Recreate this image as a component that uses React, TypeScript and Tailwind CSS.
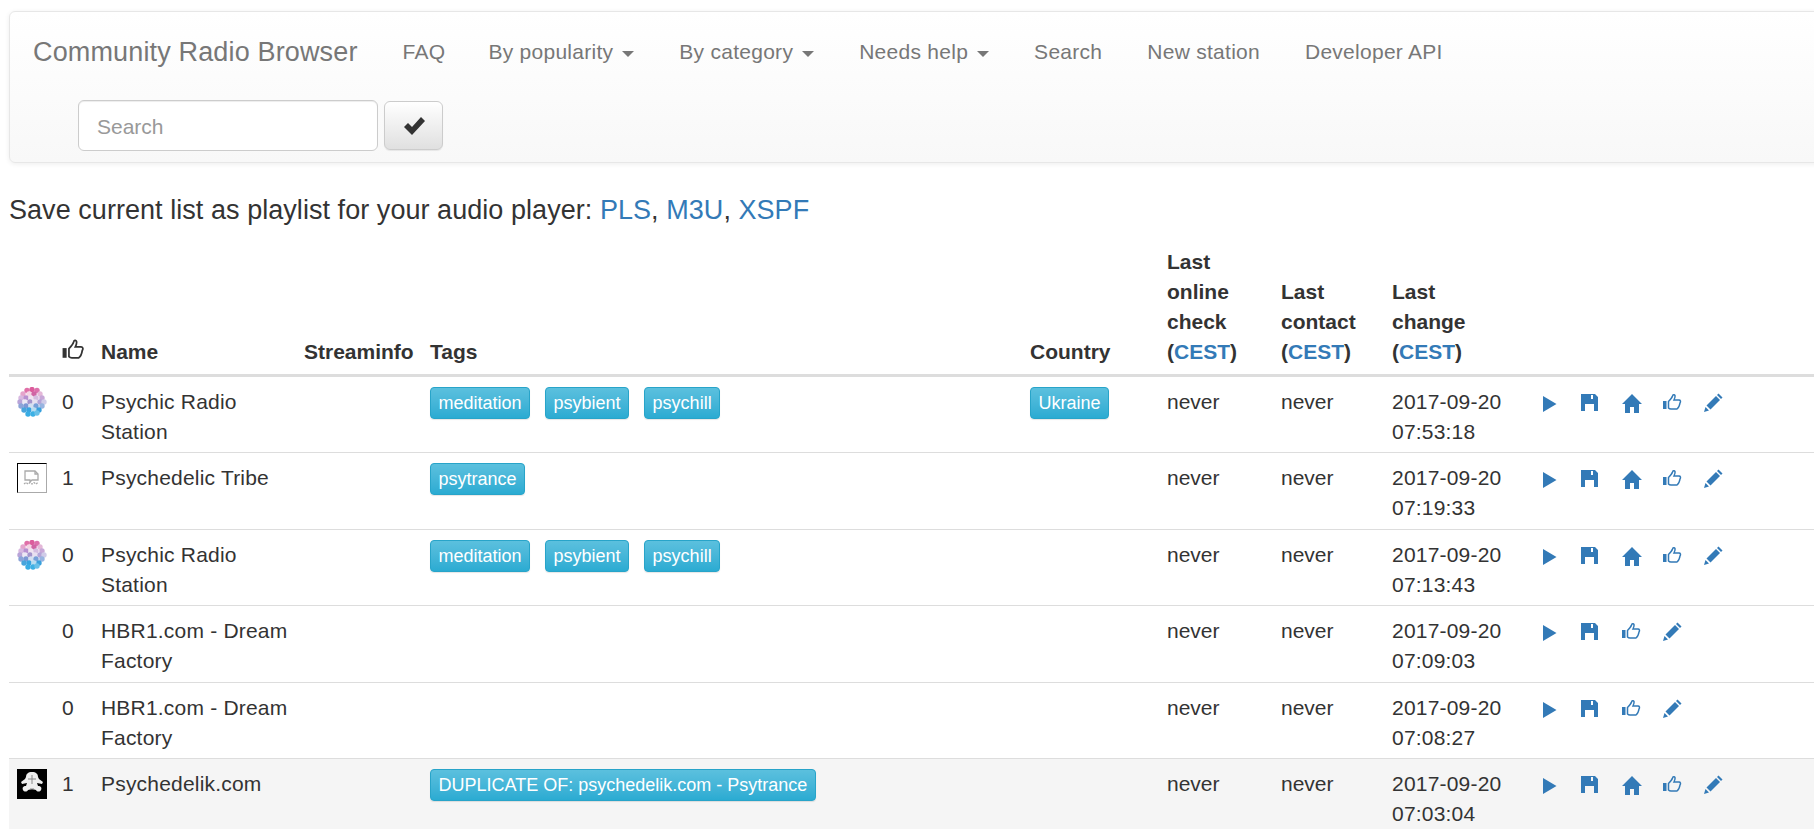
import type { ReactNode } from 'react'

const rows = [
  { img: 'flower', votes: 0, name: 'Psychic Radio Station', tags: ['meditation', 'psybient', 'psychill'], country: 'Ukraine', date: '2017-09-20', time: '07:53:18', home: true },
  { img: 'broken', votes: 1, name: 'Psychedelic Tribe', tags: ['psytrance'], country: '', date: '2017-09-20', time: '07:19:33', home: true },
  { img: 'flower', votes: 0, name: 'Psychic Radio Station', tags: ['meditation', 'psybient', 'psychill'], country: '', date: '2017-09-20', time: '07:13:43', home: true },
  { img: '', votes: 0, name: 'HBR1.com - Dream Factory', tags: [], country: '', date: '2017-09-20', time: '07:09:03', home: false },
  { img: '', votes: 0, name: 'HBR1.com - Dream Factory', tags: [], country: '', date: '2017-09-20', time: '07:08:27', home: false },
  { img: 'black', votes: 1, name: 'Psychedelik.com', tags: ['DUPLICATE OF: psychedelik.com - Psytrance'], country: '', date: '2017-09-20', time: '07:03:04', home: true },
]

const navItems = [
  { label: 'FAQ', cls: 'flex items-center pl-[22.500px] pr-[20.500px] tracking-[0.27px]' },
  { label: 'By popularity', caret: true, cls: 'flex items-center px-[22.500px] tracking-[0.27px]' },
  { label: 'By category', caret: true, cls: 'flex items-center px-[22.500px] tracking-[0.27px]' },
  { label: 'Needs help', caret: true, cls: 'flex items-center px-[22.500px] tracking-[0.27px]' },
  { label: 'Search', cls: 'flex items-center px-[22.500px] tracking-[0.27px]' },
  { label: 'New station', cls: 'flex items-center px-[22.500px] tracking-[0.27px]' },
  { label: 'Developer API', cls: 'flex items-center px-[22.500px] tracking-[0.27px]' },
]

const dots = [
  [15, 2.500, '#dc5c9c'], [10, 3.500, '#e070a8'], [20, 3.500, '#dc70ac'], [6, 7, '#e4a4cc'], [12, 7, '#f4d4e4'], [17, 7, '#d064a4'], [23, 7, '#e4b8d8'],
  [4, 11, '#d8b8e0'], [9, 11, '#b890d0'], [14, 11, '#f0e4f0'], [19, 11, '#d4bce0'], [25, 11, '#c8a8d8'],
  [3, 15, '#b8a4d8'], [8, 15, '#ece8f4'], [13, 15, '#a494cc'], [18, 15, '#e8e0f0'], [23, 15, '#b4a4d8'], [27, 15, '#d0cce8'],
  [4, 19, '#8ca4d8'], [9, 19, '#7c98d4'], [14, 19, '#d4e0f0'], [19, 19, '#78a0d8'], [25, 19, '#98b4e0'],
  [7, 23, '#48a4dc'], [12, 23, '#38a4e0'], [17, 23, '#b8dcf0'], [22, 23, '#38a0dc'],
  [11, 27, '#38ace4'], [16, 27, '#3cb0e4'], [20, 26, '#68c0e8'],
] as const

function Flower() {
  return (
    <svg width="30" height="30" viewBox="0 0 30 30" className="block">
      {dots.map(([x, y, c], i) => (
        <circle key={i} cx={x} cy={y} r="2.700" fill={c} />
      ))}
    </svg>
  )
}

function Broken() {
  return (
    <div className="w-[30px] h-[30px] border border-t-black border-l-black border-r-[#aaa] border-b-[#aaa] flex items-center justify-center">
      <svg width="18" height="18" viewBox="0 0 18 18" fill="none" stroke="#aaa" strokeWidth="1.300">
        <path d="M2 2h10l3 3v6H9l-2 2v-2H2z" />
        <path d="M12 2v3h3" />
        <path d="M1 15l2-1.500 2 1.500 2-1.500 2 1.500 2-1.500 2 1.500 2-1.500" strokeDasharray="2 1" />
      </svg>
    </div>
  )
}

function BlackLogo() {
  return (
    <svg width="30" height="30" viewBox="0 0 30 30" className="block">
      <rect width="30" height="30" fill="#000" />
      <path d="M15 3c4 0 6 2 6 5l1 2 4 3-1 2-5-1 1 3c3 0 4 2 3 4s-4 2-5 0l-4-1-4 1c-1 2-4 2-5 0s0-4 3-4l1-3-5 1-1-2 4-3 1-2c0-3 2-5 6-5z" fill="#eee" />
      <path d="M15 6v9M11 10h8M13 20h4" stroke="#888" strokeWidth="1" />
    </svg>
  )
}

function Glyph({ children }: { children: ReactNode }) {
  return (
    <svg width="21" height="21" viewBox="0 0 21 21" fill="#337ab7" className="block">
      {children}
    </svg>
  )
}

const playIcon = <polygon points="4,3 17.500,11 4,19" />
const saveIcon = <path fillRule="evenodd" d="M1 1h14l3 3v14H1zM11 2v4h2V2zM5 11v7h9v-7z" />
const homeIcon = <path d="M11 1l10 10h-3v9h-5v-6H9v6H4v-9H1z" />
const pencilIcon = (
  <>
    <polygon points="3.500,12.500 13,3 17,7 7.500,16.500" />
    <polygon points="14,2 15.500,0.500 19.500,4.500 18,6" />
    <polygon points="2.500,14 6,17.500 1,19" />
  </>
)

function ThumbPaths({ color }: { color: string }) {
  return (
    <>
      <rect x="1" y="8" width="3.500" height="8" fill={color} />
      <path
        d="M6.500 8.500C8 7 10 5 10.500 3C10.800 1.500 12.500 1.200 13 2.500C13.500 4 12.500 6 12 7H17C18.500 7 19 8.500 18 10C17.500 13 16.500 15 15 16H9C8 16 7 15.500 6.500 15Z"
        fill="none"
        stroke={color}
        strokeWidth="1.500"
      />
    </>
  )
}

function Tag({ children }: { children: ReactNode }) {
  return (
    <span className="inline-block h-8 px-[7.500px] border border-[#28a4c9] rounded-[4px] bg-gradient-to-b from-[#5bc0de] to-[#2aabd2] text-white text-[18px] leading-[31px] whitespace-nowrap shadow-[0_1px_1px_rgba(0,0,0,0.1)]">
      {children}
    </span>
  )
}

function TimeHeader({ lines }: { lines: string[] }) {
  return (
    <th className="px-2 pb-[7px] pt-2 text-left align-bottom font-bold tracking-normal">
      {lines.map((l) => (
        <div key={l}>{l}</div>
      ))}
      (<a className="text-[#337ab7]">CEST</a>)
    </th>
  )
}

export default function App() {
  return (
    <div className="h-screen overflow-hidden bg-white font-['Liberation_Sans',Arial,sans-serif] text-[21px] leading-[30px] text-[#333]">
      <div className="w-[1900px] pl-[9px] pt-[11px]">
        {/* Navbar */}
        <nav className="h-[152px] border border-[#e7e7e7] rounded-[6px] bg-gradient-to-b from-white to-[#f8f8f8] shadow-[0_1px_5px_rgba(0,0,0,0.075)] pl-[23px]">
          <div className="flex items-center h-[80px] text-[#777]">
            <span className="text-[27px] tracking-[0.15px] mr-[22.500px]">Community Radio Browser</span>
            {navItems.map((item) => (
              <span key={item.label} className={item.cls}>
                {item.label}
                {item.caret && (
                  <span className="ml-[9px] mt-[3px] w-0 h-0 border-x-[6px] border-t-[6px] border-x-transparent border-t-[#777]" />
                )}
              </span>
            ))}
          </div>
          <div className="flex items-start gap-[6px] pl-[45px] mt-[8px]">
            <div className="w-[300px] h-[51px] border border-[#ccc] rounded-[6px] bg-white shadow-[inset_0_1px_1px_rgba(0,0,0,0.075)] px-[18px] leading-[51px] text-[#999]">
              Search
            </div>
            <button className="w-[59px] h-[49px] mt-[1px] border border-[#ccc] rounded-[6px] bg-gradient-to-b from-white to-[#e0e0e0] flex items-center justify-center shadow-[0_1px_1px_rgba(0,0,0,0.075)]">
              <svg width="22" height="20" viewBox="0 0 22 20" fill="#333">
                <path d="M1 11l4-4 4 4L18 1l4 4L9 19z" />
              </svg>
            </button>
          </div>
        </nav>

        <p className="mt-[28px] mb-[10px] text-[27px] leading-[38px] tracking-[0.05px]">
          Save current list as playlist for your audio player: <a className="text-[#337ab7]">PLS</a>, <a className="text-[#337ab7]">M3U</a>, <a className="text-[#337ab7]">XSPF</a>
        </p>

        <table className="w-full table-fixed border-collapse tracking-[0.2px]">
          <colgroup>
            <col className="w-[45px]" />
            <col className="w-[39px]" />
            <col className="w-[203px]" />
            <col className="w-[126px]" />
            <col className="w-[600px]" />
            <col className="w-[137px]" />
            <col className="w-[114px]" />
            <col className="w-[111px]" />
            <col className="w-[147px]" />
            <col />
          </colgroup>
          <thead>
            <tr className="border-b-[3px] border-[#ddd]">
              <th />
              <th className="px-2 pb-[7px] text-left align-bottom">
                <svg width="22" height="20" viewBox="0.500 0.500 19 16.500" preserveAspectRatio="none" className="block mb-[8px]">
                  <ThumbPaths color="#333" />
                </svg>
              </th>
              <th className="px-2 pb-[7px] text-left align-bottom font-bold tracking-normal">Name</th>
              <th className="px-2 pb-[7px] text-left align-bottom font-bold tracking-normal">Streaminfo</th>
              <th className="px-2 pb-[7px] text-left align-bottom font-bold tracking-normal">Tags</th>
              <th className="px-2 pb-[7px] text-left align-bottom font-bold tracking-normal">Country</th>
              <TimeHeader lines={['Last', 'online', 'check']} />
              <TimeHeader lines={['Last', 'contact']} />
              <TimeHeader lines={['Last', 'change']} />
              <th />
            </tr>
          </thead>
          <tbody>
            {rows.map((row, i) => (
              <tr key={i} className={i === 5 ? 'border-t border-[#ddd] bg-[#f5f5f5]' : 'border-t border-[#ddd]'}>
                <td className="pl-2 pt-[10px] pb-[5.300px] align-top">
                  {row.img === 'flower' && <Flower />}
                  {row.img === 'broken' && <Broken />}
                  {row.img === 'black' && <BlackLogo />}
                </td>
                <td className="px-2 pt-[10px] pb-[5.300px] align-top">{row.votes}</td>
                <td className={i === 3 ? 'px-2 pt-[10px] pb-[6.300px] align-top' : 'px-2 pt-[10px] pb-[5.300px] align-top'}>{row.name}</td>
                <td />
                <td className="px-2 pt-[10px] pb-[5.300px] align-top tracking-normal">
                  <div className="flex gap-[15px]">
                    {row.tags.map((t) => (
                      <Tag key={t}>{t}</Tag>
                    ))}
                  </div>
                </td>
                <td className="px-2 pt-[10px] pb-[5.300px] align-top tracking-normal">{row.country && <Tag>{row.country}</Tag>}</td>
                <td className="px-2 pt-[10px] pb-[5.300px] align-top tracking-normal">never</td>
                <td className="px-2 pt-[10px] pb-[5.300px] align-top tracking-normal">never</td>
                <td className="px-2 pt-[10px] pb-[5.300px] align-top">
                  {row.date}
                  <br />
                  {row.time}
                </td>
                <td className="px-2 pt-[16px] align-top">
                  <div className="flex gap-5">
                    <Glyph>{playIcon}</Glyph>
                    <Glyph>{saveIcon}</Glyph>
                    {row.home && <Glyph>{homeIcon}</Glyph>}
                    <Glyph>
                      <ThumbPaths color="#337ab7" />
                    </Glyph>
                    <Glyph>{pencilIcon}</Glyph>
                  </div>
                </td>
              </tr>
            ))}
          </tbody>
        </table>
      </div>
    </div>
  )
}
